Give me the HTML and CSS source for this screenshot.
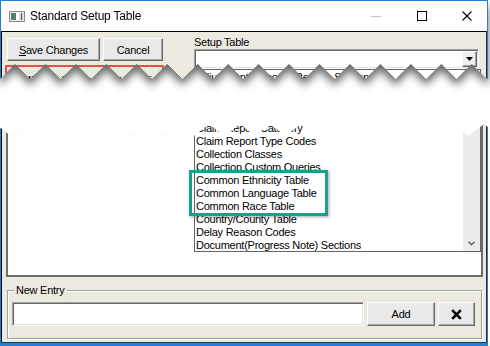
FILE: index.html
```html
<!DOCTYPE html>
<html>
<head>
<meta charset="utf-8">
<title>Standard Setup Table</title>
<link rel="stylesheet" href="styles.css">
</head>
<body>
<div class="sheet">
  <div class="tear-shadow">
    <div class="piece piece-top">
      <div class="win win-top">
        <div class="titlebar">
          <svg class="app-icon" width="16" height="11" viewBox="0 0 16 11">
            <rect x="0.5" y="0.5" width="15" height="10" fill="#e9e9e9" stroke="#8a8a8a"/>
            <rect x="2" y="2" width="5" height="7" fill="#5f7d6c"/>
            <rect x="7" y="2" width="3" height="7" fill="#ffffff"/>
            <rect x="11" y="2" width="3" height="7" fill="#c9c9c9"/>
            <rect x="12" y="2" width="1" height="7" fill="#6a6a6a"/>
          </svg>
          <span class="title">Standard Setup Table</span>
          <div class="controls">
            <span class="ctl-min"></span>
            <span class="ctl-max"></span>
            <svg class="ctl-close" width="10" height="10" viewBox="0 0 10 10"><path d="M0.5 0.5L9.5 9.5M9.5 0.5L0.5 9.5" stroke="#000" stroke-width="1.1" fill="none"/></svg>
          </div>
        </div>
        <div class="client client-top beige">
          <div class="left-col">
            <div class="btn-row">
              <button class="btn btn-save"><u>S</u>ave Changes</button>
              <button class="btn btn-cancel">Cancel</button>
            </div>
            <div class="alert-box">Missing All Appropriate Entries</div>
          </div>
          <div class="right-col">
            <div class="field-label">Setup Table</div>
            <div class="combo">
              <div class="combo-btn"><svg width="7" height="4" viewBox="0 0 7 4"><path d="M0 0H7L3.5 4Z" fill="#000"/></svg></div>
            </div>
            <div class="droplist droplist-top">
              <div class="rows">
                <div class="row">Adjustment Discount Reason Sections</div>
              </div>
              <div class="vscroll vscroll-top"><svg width="7" height="4" viewBox="0 0 7 4"><path d="M0.5 3.5L3.5 0.8L6.5 3.5" stroke="#606060" stroke-width="1.3" fill="none"/></svg></div>
            </div>
          </div>
        </div>
      </div>
    </div>
  </div>

  <div class="piece piece-bottom">
    <div class="win win-bottom">
      <div class="client client-bottom beige">
        <div class="panel">
          <div class="droplist droplist-bottom">
            <div class="rows">
              <div class="row">Claim Report Category</div>
              <div class="row">Claim Report Type Codes</div>
              <div class="row">Collection Classes</div>
              <div class="row">Collection Custom Queries</div>
              <div class="row">Common Ethnicity Table</div>
              <div class="row">Common Language Table</div>
              <div class="row">Common Race Table</div>
              <div class="row">Country/County Table</div>
              <div class="row">Delay Reason Codes</div>
              <div class="row">Document(Progress Note) Sections</div>
            </div>
            <div class="vscroll vscroll-bottom"><svg width="7" height="5" viewBox="0 0 7 5"><path d="M0.5 0.8L3.5 3.8L6.5 0.8" stroke="#606060" stroke-width="1.4" fill="none"/></svg></div>
            <div class="highlight"></div>
          </div>
        </div>
        <div class="groupbox">
          <span class="group-label beige">New Entry</span>
          <div class="entry"></div>
          <button class="btn btn-add">Add</button>
          <button class="btn btn-del"><svg width="11" height="11" viewBox="0 0 11 11"><path d="M1.2 1.2L9.8 9.8M9.8 1.2L1.2 9.8" stroke="#000" stroke-width="2.6" fill="none"/></svg></button>
        </div>
      </div>
    </div>
  </div>
</div>
</body>
</html>
```

FILE: styles.css
```css
* { box-sizing: border-box; }
html, body { margin: 0; padding: 0; }
body {
  width: 490px;
  height: 346px;
  overflow: hidden;
  background: #fff;
  font-family: "Liberation Sans", Arial, sans-serif;
  font-size: 11px;
  letter-spacing: -0.25px;
  line-height: 14px;
  color: #000;
}

.sheet {
  width: 490px;
  height: 346px;
  display: flex;
  flex-direction: column;
}

.tear-shadow {
  position: relative;
  z-index: 1;
  filter: drop-shadow(0 6px 4px rgba(0, 0, 0, 0.6));
}

.piece {
  width: 490px;
  overflow: hidden;
}

.piece-top {
  height: 84px;
  clip-path: polygon(0 0, 490px 0, 490px 76px, 487px 79px, 471.8px 64px, 456.5px 79px, 441.3px 64px, 426.1px 79px, 410.9px 64px, 395.6px 79px, 380.4px 64px, 365.2px 79px, 350px 64px, 334.7px 79px, 319.5px 64px, 304.3px 79px, 289px 64px, 273.8px 79px, 258.6px 64px, 243.4px 79px, 228.2px 64px, 212.9px 79px, 197.7px 64px, 182.5px 79px, 167.3px 64px, 152px 79px, 136.8px 64px, 121.6px 79px, 106.4px 64px, 91.1px 79px, 76px 64px, 60.7px 79px, 45.5px 64px, 30.2px 79px, 15px 64px, 0 79px);
}

.piece-bottom {
  height: 228px;
  margin-top: 34px;
  clip-path: polygon(0 9.5px, 11px 18px, 26px 6px, 41.5px 18px, 57px 6px, 72px 18px, 87px 6px, 102.5px 18px, 118px 6px, 133px 18px, 148px 6px, 163.5px 18px, 179px 6px, 194px 18px, 209px 6px, 224.5px 18px, 240px 6px, 255px 18px, 270px 6px, 285.5px 18px, 301px 6px, 316px 18px, 331px 6px, 346.5px 18px, 362px 6px, 377px 18px, 392px 6px, 407.5px 18px, 423px 6px, 438px 18px, 453px 6px, 468.5px 18px, 484px 6px, 490px 10.7px, 490px 228px, 0 228px);
}

.beige {
  background-color: #eae9df;
  background-image: conic-gradient(#e4e2d5 25%, #f2f1ea 0 50%, #e4e2d5 0 75%, #f2f1ea 0);
  background-size: 2px 2px;
}

.win {
  width: 488px;
  height: 100%;
  border: 1px solid #1f80d6;
  display: flex;
  flex-direction: column;
}
.win-top { border-bottom: 0; }
.win-bottom { border-top: 0; border-bottom-width: 3px; }

/* title bar */
.titlebar {
  height: 30px;
  flex: none;
  background: #fff;
  display: flex;
  align-items: center;
  padding-left: 8px;
}
.app-icon { display: block; flex: none; }
.title {
  margin-left: 5px;
  font-size: 12px;
  letter-spacing: -0.2px;
  line-height: 14px;
}
.controls {
  margin-left: auto;
  padding-right: 15px;
  display: flex;
  align-items: center;
}
.ctl-min {
  width: 10px;
  height: 1px;
  background: #c4c4c4;
}
.ctl-max {
  width: 10px;
  height: 10px;
  border: 1px solid #000;
  margin-left: 36px;
}
.ctl-close {
  display: block;
  margin-left: 35px;
}

/* client */
.client {
  flex: 1;
  border-left: 1px solid #000;
  border-right: 1px solid #2c2c2c;
}
.client-top {
  border-top: 1px solid #000;
  display: flex;
}
.left-col {
  width: 192px;
  flex: none;
  padding-top: 6px;
}
.btn-row {
  display: flex;
  gap: 3px;
  margin-left: 5px;
}
.btn {
  font: inherit;
  letter-spacing: inherit;
  color: #000;
  padding: 0;
  margin: 0;
  height: 23px;
  background: #e9e9e9;
  border: 1px solid;
  border-color: #fdfdfd #6a6a6a #6a6a6a #fdfdfd;
  box-shadow: inset -1px -1px 0 #a8a8a8;
  display: flex;
  align-items: center;
  justify-content: center;
}
.btn-save { width: 93px; }
.btn-cancel { width: 60px; }

.alert-box {
  margin: 4px 0 0 3px;
  width: 159px;
  height: 40px;
  border: 2px solid #f04a4a;
  padding: 6px 0 0 15px;
  white-space: nowrap;
  overflow: hidden;
}

.right-col {
  width: 287px;
  flex: none;
  padding-top: 3px;
}
.field-label { height: 14px; }
.combo {
  width: 285px;
  height: 20px;
  background: #fff;
  border: 1px solid;
  border-color: #a0a0a0 #fff #fff #a0a0a0;
  box-shadow: inset 1px 1px 0 #696969, inset -1px -1px 0 #e3e3e3;
  display: flex;
  justify-content: flex-end;
  align-items: center;
  padding-right: 1px;
}
.combo-btn {
  width: 15px;
  height: 16px;
  background: #efefef;
  border: 1px solid;
  border-color: #fff #696969 #696969 #fff;
  box-shadow: inset -1px -1px 0 #a0a0a0;
  display: flex;
  align-items: center;
  justify-content: center;
}
.combo-btn svg { display: block; }

.droplist {
  width: 287px;
  flex: none;
  background: #fff;
  border: 1px solid #646464;
  display: flex;
}
.droplist-top {
  height: 22px;
  border-bottom: 0;
}
.droplist-top .rows { padding-top: 1px; }
.rows {
  flex: 1;
  padding-left: 1px;
  overflow: hidden;
}
.row {
  height: 13px;
  line-height: 13px;
  white-space: nowrap;
}
.vscroll {
  width: 17px;
  flex: none;
  background: #ececec;
  display: flex;
  flex-direction: column;
  align-items: center;
}
.vscroll svg { display: block; }
.vscroll-top { padding-top: 6px; }

/* bottom piece */
.client-bottom {
  border-bottom: 1px solid #1d3b5e;
  display: flex;
  flex-direction: column;
}
.panel {
  margin-left: 4px;
  width: 477px;
  height: 159px;
  flex: none;
  background: #fff;
  border: 2px solid #6d6d6d;
  border-top: 0;
  display: flex;
  justify-content: flex-end;
}
.droplist-bottom {
  height: 134px;
  border-top: 0;
  position: relative;
}
.droplist-bottom .rows { padding-top: 4px; }
.vscroll-bottom {
  justify-content: flex-end;
  padding-bottom: 5px;
}
.highlight {
  position: absolute;
  left: -6px;
  top: 52px;
  width: 139px;
  height: 46px;
  border: 3px solid #19a08b;
  box-shadow: 1px 1px 3px rgba(0, 0, 0, 0.35);
}

.groupbox {
  position: relative;
  margin: 13px 0 0 5px;
  width: 475px;
  border: 1px solid #a0a0a0;
  box-shadow: 1px 1px 0 #fff, inset 1px 1px 0 #fff;
  padding: 11px 0 12px 4px;
  display: flex;
}
.group-label {
  position: absolute;
  left: 6px;
  top: -8px;
  padding: 0 2px;
  line-height: 14px;
}
.entry {
  width: 352px;
  height: 24px;
  margin-right: 3px;
  background: #fff;
  border: 1px solid;
  border-color: #a0a0a0 #fff #fff #a0a0a0;
  box-shadow: inset 1px 1px 0 #696969, inset -1px -1px 0 #e3e3e3;
}
.btn-add {
  width: 68px;
  height: 24px;
  margin-right: 3px;
}
.btn-del {
  width: 37px;
  height: 24px;
}
.btn-del svg { display: block; }
```
